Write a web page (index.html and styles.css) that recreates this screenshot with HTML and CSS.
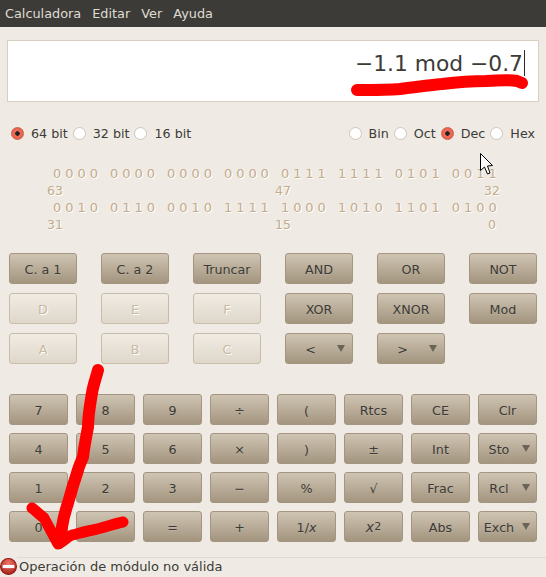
FILE: index.html
```html
<!DOCTYPE html>
<html lang="es">
  <head>
    <meta charset="UTF-8" />
    <title>Calculadora</title>
    <link rel="stylesheet" href="styles.css">
  </head>
  <body>
    <nav class="menubar">
      <span>Calculadora</span>
      <span>Editar</span>
      <span>Ver</span>
      <span>Ayuda</span>
    </nav>

    <div class="display">−1.1 mod −0.7<i class="display__caret"></i></div>

    <div class="modes">
      <div class="modes__group">
        <label class="radio radio--on">64 bit</label>
        <label class="radio">32 bit</label>
        <label class="radio">16 bit</label>
      </div>
      <div class="modes__group">
        <label class="radio">Bin</label>
        <label class="radio">Oct</label>
        <label class="radio radio--on">Dec</label>
        <label class="radio">Hex</label>
      </div>
    </div>

    <div class="bits">
      <div class="bits__digits">0 0 0 0   0 0 0 0   0 0 0 0   0 0 0 0   0 1 1 1   1 1 1 1   0 1 0 1   0 0 1 1</div>
      <div class="bits__labels"><span>63</span><span>47</span><span class="bits__end">32</span></div>
      <div class="bits__digits">0 0 1 0   0 1 1 0   0 0 1 0   1 1 1 1   1 0 0 0   1 0 1 0   1 1 0 1   0 1 0 0</div>
      <div class="bits__labels"><span>31</span><span>15</span><span class="bits__end bits__end--zero">0</span></div>
    </div>

    <div class="keys keys--prog">
      <button class="key">C. a 1</button>
      <button class="key">C. a 2</button>
      <button class="key">Truncar</button>
      <button class="key">AND</button>
      <button class="key">OR</button>
      <button class="key">NOT</button>
      <button class="key" disabled>D</button>
      <button class="key" disabled>E</button>
      <button class="key" disabled>F</button>
      <button class="key">XOR</button>
      <button class="key">XNOR</button>
      <button class="key">Mod</button>
      <button class="key" disabled>A</button>
      <button class="key" disabled>B</button>
      <button class="key" disabled>C</button>
      <button class="key key--menu"><span>&lt;</span></button>
      <button class="key key--menu"><span>&gt;</span></button>
    </div>

    <div class="keys keys--main">
      <button class="key">7</button>
      <button class="key">8</button>
      <button class="key">9</button>
      <button class="key">÷</button>
      <button class="key">(</button>
      <button class="key">Rtcs</button>
      <button class="key">CE</button>
      <button class="key">Clr</button>
      <button class="key">4</button>
      <button class="key">5</button>
      <button class="key">6</button>
      <button class="key">×</button>
      <button class="key">)</button>
      <button class="key">±</button>
      <button class="key">Int</button>
      <button class="key key--menu"><span>Sto</span></button>
      <button class="key">1</button>
      <button class="key">2</button>
      <button class="key">3</button>
      <button class="key">−</button>
      <button class="key">%</button>
      <button class="key">√</button>
      <button class="key">Frac</button>
      <button class="key key--menu"><span>Rcl</span></button>
      <button class="key">0</button>
      <button class="key"></button>
      <button class="key">=</button>
      <button class="key">+</button>
      <button class="key">1/<em>x</em></button>
      <button class="key key--square"><em>x</em><sup>2</sup></button>
      <button class="key">Abs</button>
      <button class="key key--menu"><span>Exch</span></button>
    </div>

    <footer class="status">
      <svg class="status__icon" viewBox="0 0 16 16">
        <defs>
          <radialGradient id="stop" cx="50%" cy="30%" r="70%">
            <stop offset="0" stop-color="#f0776a" />
            <stop offset="1" stop-color="#a8201a" />
          </radialGradient>
        </defs>
        <circle cx="8" cy="8" r="7.500" fill="url(#stop)" stroke="#8c1a14" />
        <rect x="2.500" y="6.500" width="11" height="3" fill="#fff" />
      </svg>
      <span class="status__text">Operación de módulo no válida</span>
    </footer>

    <!-- red marks drawn over the screenshot, and the mouse pointer -->
    <svg class="marks" viewBox="0 0 546 577">
      <g fill="none" stroke="#f00" stroke-linecap="round" stroke-linejoin="round">
        <path stroke-width="12" d="M357 90 C372 90 388 90 400 89 C415 87 430 85 442 84 C458 82 472 81 486 81 C500 80 512 80 517 81 L522 83" />
        <path stroke-width="12" d="M98 370 C96 378 93 386 92 393 C90 405 88 416 88 427 C86 438 84 448 83 457 C81 462 79 466 78 470 C74 482 71 492 68 503 C65 512 63 520 62 527 L59 543" />
        <path stroke-width="11" d="M32 508 C36 511 40 515 44 518 L58 544 C62 543 67 537 72 535 C80 533 87 531 93 530 C103 528 113 524 123 522" />
      </g>
      <path d="M480.500 153.500 V170.500 L484.500 167 L487.500 174 L490 173 L487.500 166 L492.500 165.500 Z" fill="#fff" stroke="#000" />
    </svg>
  </body>
</html>
```

FILE: styles.css
```css
body {
  margin: 0;
  position: relative;
  width: 546px;
  height: 577px;
  overflow: hidden;
  background: #efebe4;
  color: #3c3b37;
  font-family: "DejaVu Sans", sans-serif;
  font-size: 12.700px;
}

.menubar {
  display: flex;
  gap: 11px;
  height: 27px;
  align-items: center;
  padding-left: 5px;
  background: #3c3b37;
  color: #dfdbd2;
  font-size: 12.850px;
}

.display {
  box-sizing: border-box;
  height: 62px;
  margin: 13px 7px 0;
  padding: 0 13px 16px 0;
  display: flex;
  justify-content: flex-end;
  align-items: center;
  background: #fff;
  border: 1px solid #d8cfc0;
  font-size: 21.800px;
}
.display__caret {
  width: 1px;
  height: 26px;
  margin-left: 1px;
  background: #2a2a2a;
}

.modes {
  display: flex;
  justify-content: space-between;
  margin-top: 22px;
  padding: 0 11px;
  height: 18px;
}
.modes__group {
  display: flex;
  gap: 5px;
}

.radio {
  display: flex;
  align-items: center;
  gap: 7px;
}
.radio::before {
  content: "";
  box-sizing: border-box;
  width: 13px;
  height: 13px;
  border: 1px solid #cfc6b8;
  border-radius: 50%;
  background: #fff;
}
.radio--on::before {
  border-color: #c9604a;
  background: radial-gradient(circle, #222 0 2px, #f0705c 2.500px, #e2553f);
}

.bits {
  margin-top: 23px;
  padding-left: 47px;
  width: 453px;
  color: #c4ab8c;
  font-size: 12.500px;
  line-height: 17px;
  text-shadow: 1px 1px 0 #fff;
}
.bits__digits {
  padding-left: 6px;
  white-space: pre;
  font-size: 13px;
  letter-spacing: -0.090px;
}
.bits__labels {
  display: grid;
  grid-template-columns: 228px 1fr 1fr;
}
.bits__end {
  text-align: right;
}
.bits__end--zero {
  padding-right: 4px;
}

.keys {
  display: grid;
  justify-content: center;
  grid-auto-rows: 31px;
}
.keys--prog {
  margin-top: 20px;
  grid-template-columns: repeat(6, 68px);
  column-gap: 24px;
  row-gap: 9px;
}
.keys--main {
  margin-top: 30px;
  grid-template-columns: repeat(8, 59px);
  column-gap: 8px;
  row-gap: 8px;
}

.key {
  padding: 1px 0 0;
  display: flex;
  align-items: center;
  justify-content: center;
  border: 1px solid #a39580;
  border-radius: 3px;
  background: linear-gradient(#cfc4b3, #a3957f);
  color: #3c3b37;
  font: inherit;
  text-shadow: 0 1px 0 rgba(255, 255, 255, 0.12);
}
.key:disabled {
  border-color: #c9bda9;
  background: linear-gradient(#f0ebe3, #dfd7ca);
  color: #c8b8a0;
  text-shadow: 1px 1px 0 #fff;
}

.key--square {
  font-size: 14px;
}
.key--square sup {
  font-size: 11px;
  line-height: 0;
  vertical-align: 6px;
}

.key--menu {
  justify-content: flex-start;
  position: relative;
}
.key--menu span {
  flex: 1;
  padding-right: 17px;
  text-align: center;
}
.key--menu::after {
  content: "";
  position: absolute;
  right: 7px;
  top: 11px;
  border: solid transparent;
  border-width: 7px 4px 0;
  border-top-color: #6a6458;
}
.keys--main .key--menu::after {
  right: 6px;
}

.status {
  display: flex;
  align-items: flex-end;
  height: 19px;
  margin-top: 15px;
}
.status__icon {
  flex: none;
  width: 17px;
  height: 17px;
  margin-bottom: 1px;
}
.status__text {
  flex: 1;
  box-sizing: border-box;
  height: 19px;
  padding-left: 2px;
  border-top: 1px solid #e2dbcf;
  font-size: 13px;
  line-height: 17px;
}

.marks {
  position: absolute;
  top: 0;
  left: 0;
  width: 546px;
  height: 577px;
  pointer-events: none;
}
```
